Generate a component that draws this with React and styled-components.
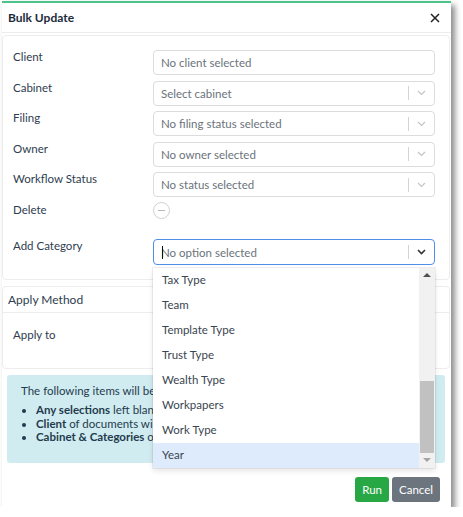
import React from 'react';
import styled, { createGlobalStyle } from 'styled-components';

const GlobalStyle = createGlobalStyle`
    body{
        margin: 0;
        background: #ffffff;
        font-family: Lato, "Open Sans", sans-serif;
        font-size: 11.5px;
        color: #2e3d4f;
    }
`

const fields = [
    { label: 'Client', placeholder: 'No client selected', plain: true },
    { label: 'Cabinet', placeholder: 'Select cabinet' },
    { label: 'Filing', placeholder: 'No filing status selected' },
    { label: 'Owner', placeholder: 'No owner selected' },
    { label: 'Workflow Status', placeholder: 'No status selected' },
];

const options = ['Tax Type', 'Team', 'Template Type', 'Trust Type', 'Wealth Type', 'Workpapers', 'Work Type', 'Year'];

function Chevron({ dark }) {
    return (
        <svg width="9" height="6" viewBox="0 0 9 6">
            <path d="M1 1 L4.5 4.5 L8 1" fill="none" stroke={dark ? '#333' : '#c4c4c4'} strokeWidth={dark ? 1.6 : 1.2} />
        </svg>
    );
}

function Select({ placeholder, plain, focused, children }) {
    return (
        <SelectBox $focused={focused}>
            <Value $focused={focused}>{placeholder}</Value>
            {!plain && (
                <Indicator>
                    <Separator />
                    <Chevron dark={focused} />
                </Indicator>
            )}
            {children}
        </SelectBox>
    );
}

function App() {
    return (
        <>
            <GlobalStyle />
            <Page>
                <Modal>
                    <Header>
                        <Title>Bulk Update</Title>
                        <svg width="10" height="10" viewBox="0 0 10 10">
                            <path d="M1 1 L9 9 M9 1 L1 9" stroke="#222" strokeWidth="1.5" />
                        </svg>
                    </Header>

                    <Card>
                        <Fields>
                            {fields.map((f) => (
                                <Row key={f.label}>
                                    <Label>{f.label}</Label>
                                    <Select placeholder={f.placeholder} plain={f.plain} />
                                </Row>
                            ))}
                            <Row $tall>
                                <Label>Delete</Label>
                                <Toggle />
                            </Row>
                            <Row>
                                <Label>Add Category</Label>
                                <Select placeholder="No option selected" focused>
                                    <Menu>
                                        <OptionList>
                                            {options.map((o) => (
                                                <Option key={o} $active={o === 'Year'}>{o}</Option>
                                            ))}
                                        </OptionList>
                                        <ScrollBar>
                                            <Arrow $up />
                                            <Track />
                                            <Thumb />
                                            <Arrow />
                                        </ScrollBar>
                                    </Menu>
                                </Select>
                            </Row>
                        </Fields>
                    </Card>

                    <Card $gap>
                        <CardHeader>Apply Method</CardHeader>
                        <CardBody>
                            <Row>
                                <Label>Apply to</Label>
                                <Select placeholder="" />
                            </Row>
                        </CardBody>
                    </Card>

                    <Alert>
                        <p>The following items will be unchanged:</p>
                        <ul>
                            <li><b>Any selections</b> left blank</li>
                            <li><b>Client</b> of documents with Connected clients</li>
                            <li><b>Cabinet &amp; Categories</b> of documents in workflow</li>
                        </ul>
                    </Alert>

                    <Footer>
                        <Button $color="#28a745">Run</Button>
                        <Button $color="#6c757d">Cancel</Button>
                    </Footer>
                </Modal>
            </Page>
        </>
    );
}

const Page = styled.div`
    padding: 1px 0 0 2px;
`

const Modal = styled.div`
    width: 449px;
    height: 506px;
    box-sizing: border-box;
    background: #ffffff;
    border-top: 2px solid #4cc38a;
    box-shadow: 4px 4px 6px rgba(0, 0, 0, 0.45);
    display: flex;
    flex-direction: column;
`

const Header = styled.div`
    height: 29px;
    display: flex;
    align-items: center;
    justify-content: space-between;
    padding: 0 11px 0 6px;
    border-bottom: 1px solid #ececec;
`

const Title = styled.div`
    font-weight: 700;
    font-size: 12px;
    color: #1c2b3a;
`

const Card = styled.div`
    margin: ${(p) => (p.$gap ? '6px' : '2px')} 1px 0 0;
    border: 1px solid #ededed;
    border-radius: 4px;
`

const Fields = styled.div`
    display: flex;
    flex-direction: column;
    gap: 5.5px;
    padding: 14px 14px 14px 10px;
`

const Row = styled.div`
    display: grid;
    grid-template-columns: 140px 282px;
    height: ${(p) => (p.$tall ? '31px' : 'auto')};
`

const Label = styled.div`
    line-height: 14px;
`

const SelectBox = styled.div`
    position: relative;
    height: ${(p) => (p.$focused ? '26px' : '25px')};
    box-sizing: border-box;
    border: 1px solid ${(p) => (p.$focused ? '#4d90ec' : '#dcdcdc')};
    border-radius: 4px;
    display: flex;
    align-items: center;
    background: #ffffff;
`

const Value = styled.div`
    flex: 1;
    padding-left: 7px;
    color: #6b737b;
    position: relative;
    &::before{
        content: '';
        display: ${(p) => (p.$focused ? 'block' : 'none')};
        position: absolute;
        left: 8px;
        top: 0;
        width: 1px;
        height: 13px;
        background: #111;
    }
`

const Indicator = styled.div`
    display: flex;
    align-items: center;
    gap: 8px;
    padding-right: 8px;
`

const Separator = styled.div`
    width: 1px;
    height: 14px;
    background: #d4d4d4;
`

const Toggle = styled.div`
    width: 15px;
    height: 15px;
    margin-top: -1px;
    border: 1px solid #d0d0d0;
    border-radius: 50%;
    display: flex;
    align-items: center;
    justify-content: center;
    &::after{
        content: '';
        width: 7px;
        height: 1px;
        background: #b8b8b8;
    }
`

const Menu = styled.div`
    position: absolute;
    top: 28px;
    left: -1px;
    width: 282px;
    height: 200px;
    display: flex;
    background: #ffffff;
    box-shadow: 0 0 0 1px rgba(0, 0, 0, 0.06), 0 3px 6px rgba(0, 0, 0, 0.1);
    z-index: 5;
`

const OptionList = styled.div`
    flex: 1;
    display: flex;
    flex-direction: column;
`

const Option = styled.div`
    height: 25px;
    line-height: 24px;
    padding-left: 9px;
    color: #3a4550;
    background: ${(p) => (p.$active ? '#deebfc' : 'transparent')};
`

const ScrollBar = styled.div`
    width: 16px;
    background: #f1f1f1;
    display: flex;
    flex-direction: column;
    align-items: center;
`

const Arrow = styled.div`
    height: 15px;
    width: 16px;
    position: relative;
    &::after{
        content: '';
        position: absolute;
        left: 4px;
        top: 5px;
        border-left: 4px solid transparent;
        border-right: 4px solid transparent;
        ${(p) => (p.$up ? 'border-bottom: 4px solid #505050;' : 'border-top: 4px solid #a3a3a3;')}
    }
`

const Track = styled.div`
    flex: 1;
`

const Thumb = styled.div`
    width: 14px;
    height: 72px;
    background: #c1c1c1;
`

const CardHeader = styled.div`
    height: 25px;
    line-height: 25px;
    padding-left: 5px;
    font-size: 12px;
    border-bottom: 1px solid #ededed;
`

const CardBody = styled.div`
    padding: 15px 14px 14px 10px;
    height: 55px;
    box-sizing: border-box;
`

const Alert = styled.div`
    margin: 6px 6px 0 5px;
    height: 88px;
    box-sizing: border-box;
    background: #d1ecf1;
    border-radius: 3px;
    padding: 9px 14px 0 14px;
    color: #1f3b4d;
    p{
        margin: 0 0 5px;
        line-height: 14px;
    }
    ul{
        margin: 0;
        padding-left: 15px;
        line-height: 13.5px;
    }
    b{
        font-weight: 700;
    }
`

const Footer = styled.div`
    margin-top: auto;
    display: flex;
    justify-content: flex-end;
    gap: 3px;
    padding: 0 11px 5px 0;
`

const Button = styled.button`
    height: 25px;
    padding: 0 7px;
    border: none;
    border-radius: 3px;
    background: ${(p) => p.$color};
    color: #ffffff;
    font-family: inherit;
    font-size: 11.5px;
`

export default App;
